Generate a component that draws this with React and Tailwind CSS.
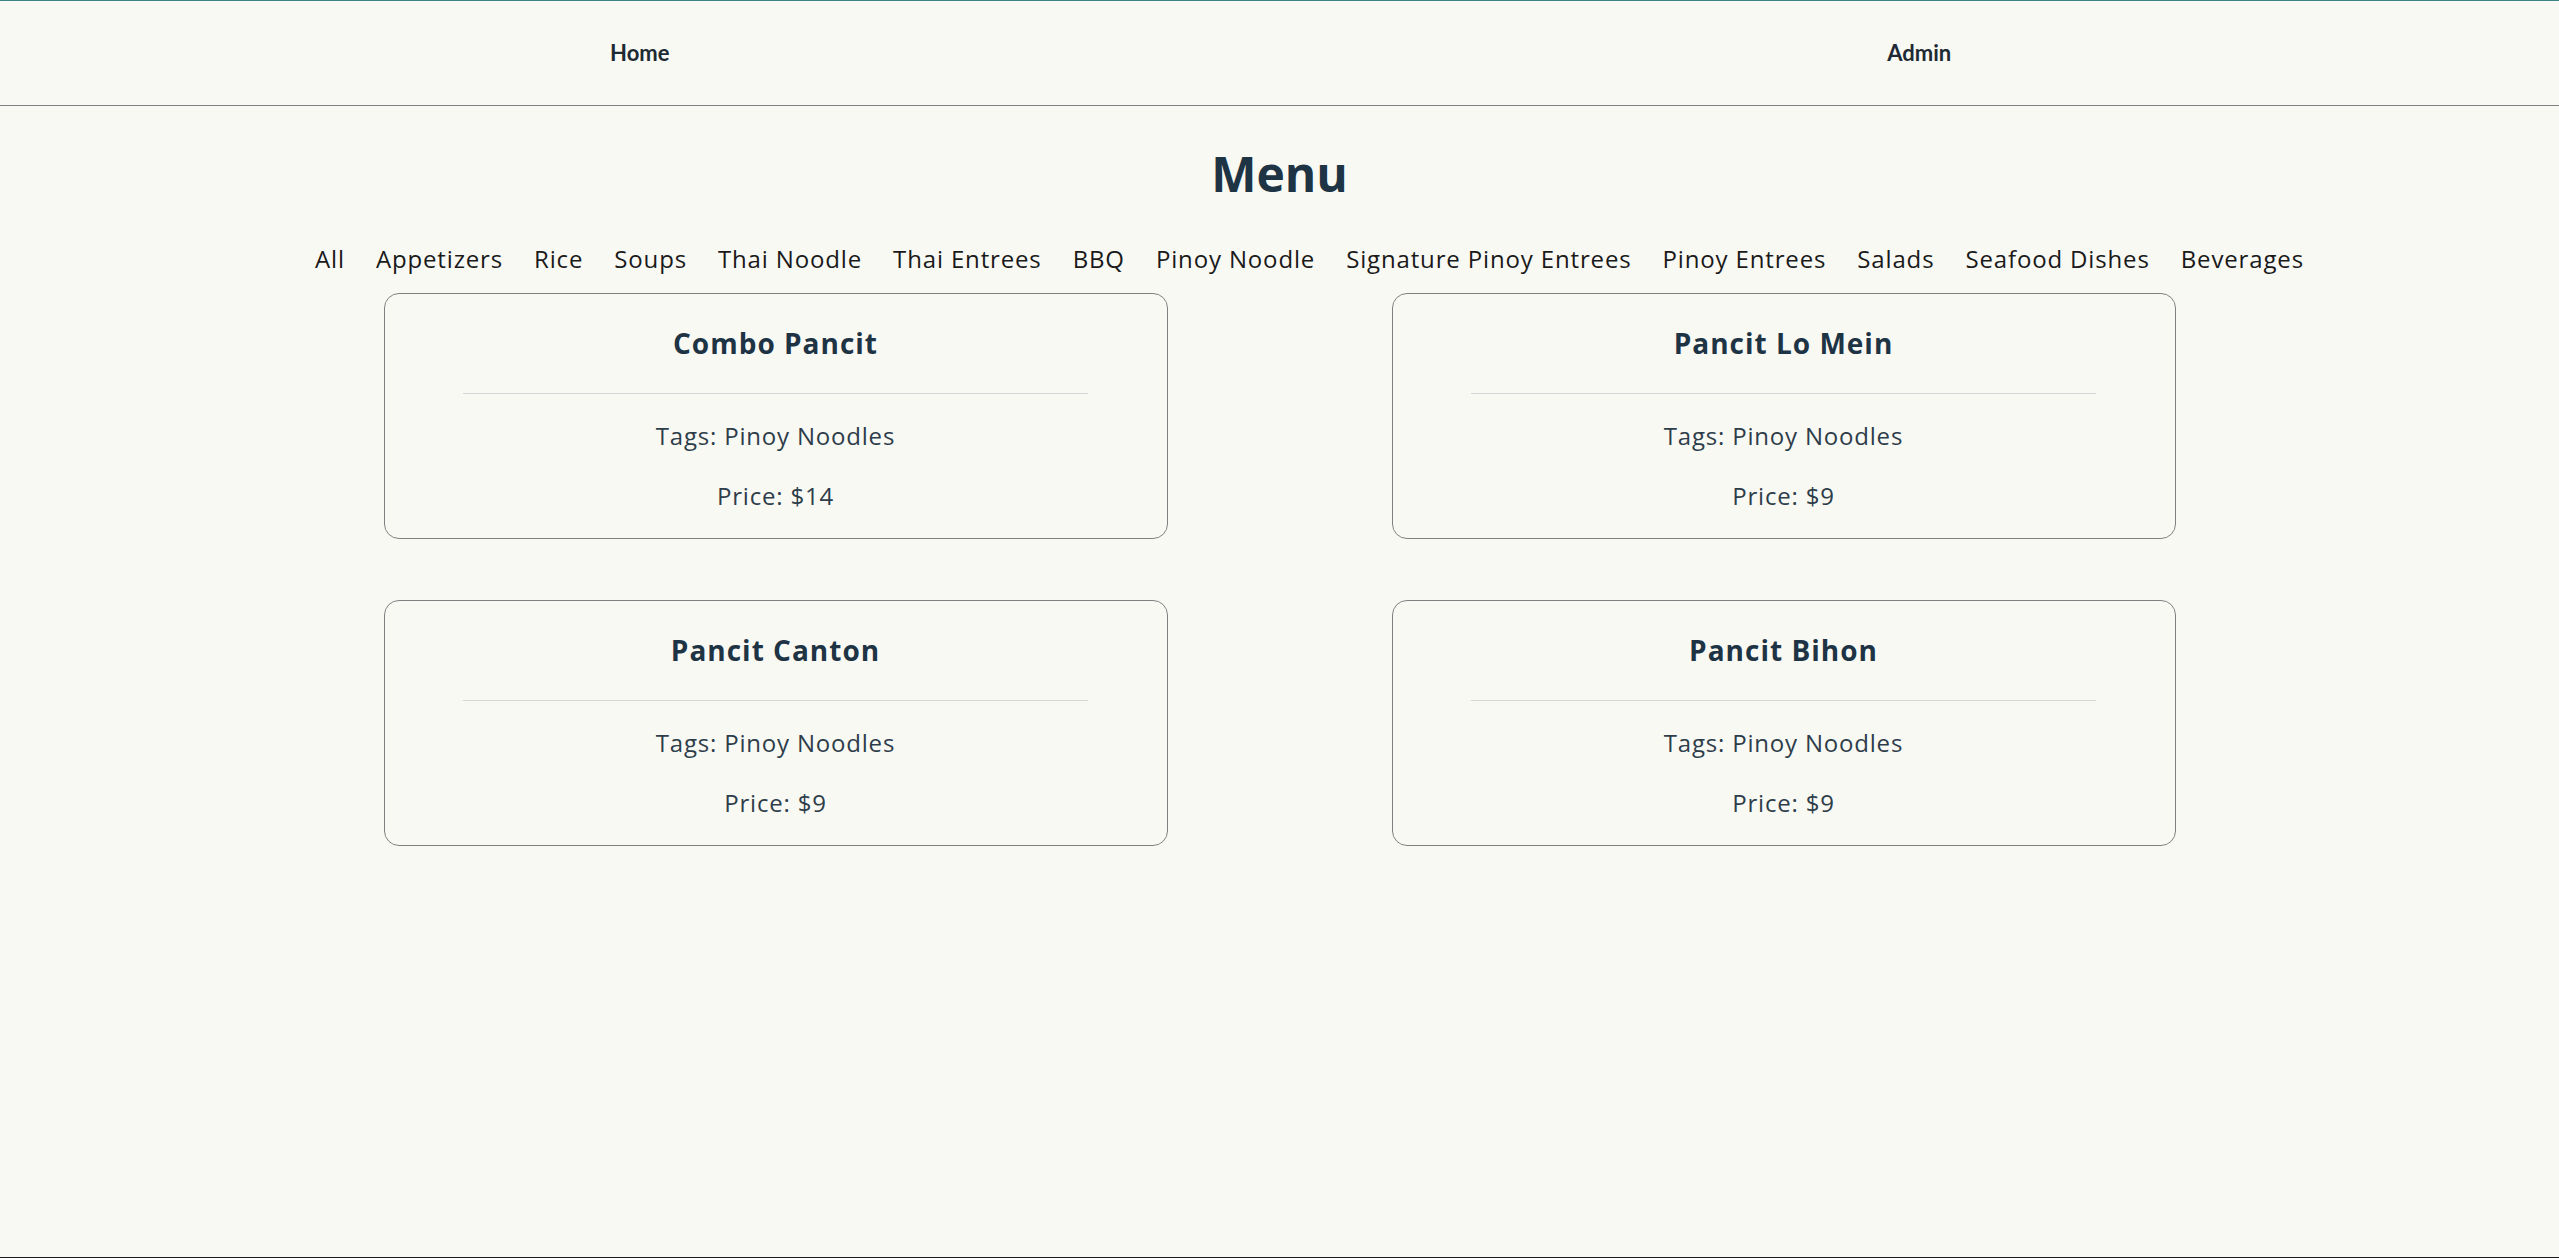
const CATEGORIES = [
  "All",
  "Appetizers",
  "Rice",
  "Soups",
  "Thai Noodle",
  "Thai Entrees",
  "BBQ",
  "Pinoy Noodle",
  "Signature Pinoy Entrees",
  "Pinoy Entrees",
  "Salads",
  "Seafood Dishes",
  "Beverages",
];

const ITEMS = [
  { name: "Combo Pancit", tags: "Pinoy Noodles", price: 14 },
  { name: "Pancit Lo Mein", tags: "Pinoy Noodles", price: 9 },
  { name: "Pancit Canton", tags: "Pinoy Noodles", price: 9 },
  { name: "Pancit Bihon", tags: "Pinoy Noodles", price: 9 },
];

const bodyFont = "font-['Open_Sans',sans-serif]";

function MenuCard({ item }) {
  return (
    <div className="w-[784px] h-[246px] border border-[#808080] rounded-[15px] flex flex-col items-center">
      <h2 className={`${bodyFont} mt-[29px] text-[28px] leading-[40px] tracking-[1px] font-bold text-[#1e3444]`}>
        {item.name}
      </h2>
      <hr className="w-4/5 mt-[30px] border-t border-[#d6d6d6]" />
      <p className={`${bodyFont} mt-[24px] text-[24px] leading-[36px] tracking-[0.8px] text-[#2e3d4a]`}>
        Tags: {item.tags}
      </p>
      <p className={`${bodyFont} mt-[24px] text-[24px] leading-[36px] tracking-[0.8px] text-[#2e3d4a]`}>
        Price: ${item.price}
      </p>
    </div>
  );
}

export default function App() {
  return (
    <div className="h-screen box-border bg-[#f9f9f4] border-t border-t-[#3b8585] border-b border-b-[#1a1a1a] overflow-hidden">
      <nav className="flex h-[105px] border-b border-[#808080]">
        {["Home", "Admin"].map((label) => (
          <a
            key={label}
            href="#"
            className="flex-1 flex items-center justify-center pb-[2px] font-['Lato',sans-serif] font-bold text-[22px] text-[#1e2a33]"
          >
            {label}
          </a>
        ))}
      </nav>

      <h1 className={`${bodyFont} mt-[36px] text-center text-[48px] leading-[64px] font-bold text-[#1e3444]`}>
        Menu
      </h1>

      <ul className={`${bodyFont} mt-[37px] pl-[60px] flex justify-center gap-[31px] text-[24px] leading-[32px] tracking-[0.85px] text-[#1a1a1a]`}>
        {CATEGORIES.map((c) => (
          <li key={c} className="cursor-pointer">
            {c}
          </li>
        ))}
      </ul>

      <div className="mt-[18px] grid grid-cols-[784px_784px] justify-center gap-x-[224px] gap-y-[61px]">
        {ITEMS.map((item) => (
          <MenuCard key={item.name} item={item} />
        ))}
      </div>
    </div>
  );
}
